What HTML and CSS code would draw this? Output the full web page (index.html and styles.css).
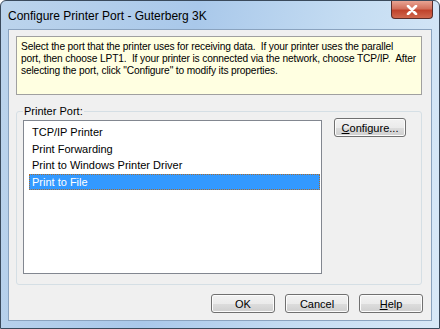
FILE: index.html
```html
<!DOCTYPE html>
<html>
<head>
<meta charset="utf-8">
<link rel="stylesheet" href="styles.css">
</head>
<body>
<div class="window">
  <div class="titlebar">
    <span class="title">Configure Printer Port - Guterberg 3K</span>
    <div class="close"><svg width="14" height="10" viewBox="0 0 14 10"><path d="M3 1 L11 9 M11 1 L3 9" stroke="#fff" stroke-width="2.6" stroke-linecap="round"/></svg></div>
  </div>
  <div class="client">
    <div class="info">Select the port that the printer uses for receiving data.&nbsp; If your printer uses the parallel<br>port, then choose LPT1.&nbsp; If your printer is connected via the network, choose TCP/IP.&nbsp; After<br>selecting the port, click "Configure" to modify its properties.</div>
    <fieldset class="group">
      <legend>Printer Port:</legend>
      <div class="grouprow">
        <div class="list">
          <div class="item">TCP/IP Printer</div>
          <div class="item">Print Forwarding</div>
          <div class="item">Print to Windows Printer Driver</div>
          <div class="item sel">Print to File</div>
        </div>
        <button class="btn cfg"><u>C</u>onfigure...</button>
      </div>
    </fieldset>
    <div class="buttons">
      <button class="btn">OK</button>
      <button class="btn">Cancel</button>
      <button class="btn"><u>H</u>elp</button>
    </div>
  </div>
</div>
</body>
</html>
```
FILE: styles.css
```css
html, body { margin: 0; padding: 0; }
body { width: 440px; height: 329px; overflow: hidden; background: #fff; font-family: "Liberation Sans", sans-serif; font-size: 11px; }
.window {
  box-sizing: border-box; width: 440px; height: 329px;
  border: 1px solid #3a4a5c; border-radius: 6px 6px 0 0;
  background: linear-gradient(100deg, #bcd4ec 0%, #a9c8ea 40%, #c4dcf2 70%, #d9e9f8 100%);
  padding: 0 7px 7px 7px; display: flex; flex-direction: column;
}
.titlebar { height: 28px; display: flex; align-items: flex-start; justify-content: space-between; }
.title { font-family: "Liberation Sans", sans-serif; font-size: 12px; color: #000; margin-top: 8px; }
.close {
  width: 42px; height: 18px; margin-right: -1px; box-sizing: border-box;
  border: 1px solid #5a2d2a; border-top: none; border-radius: 0 0 4px 4px;
  background: linear-gradient(#e8a493 0%, #d2705c 45%, #c0432c 55%, #d0684e 100%);
  display: flex; align-items: center; justify-content: center;
}
.client {
  flex: 1; background: #f0f0f0; border: 1px solid #8aa3bf;
  display: flex; flex-direction: column; padding: 6px 9px 7px 7px;
}
.info {
  background: #ffffe1; border: 1px solid #a0a0a0; height: 48px;
  padding: 4px 4px 5px 4px; line-height: 12px; color: #000;
  font-size: 10.2px; letter-spacing: -0.14px; white-space: nowrap;
}
.group {
  margin: 10px 0 0 0; border: 1px solid #d5dfe5; border-radius: 3px;
  padding: 2px 7px 10px 7px; box-sizing: border-box; min-width: 0;
}
.group legend { font-size: 11px; padding: 0 1px; margin-left: -1px; }
.grouprow { display: flex; align-items: flex-start; }
.list {
  width: 299px; height: 154px; background: #fff; border: 1px solid #828790;
  padding: 3px 1px 0 5px; box-sizing: border-box; margin-top: 1px; margin-left: -1px;
}
.item { height: 16.5px; line-height: 16px; padding-left: 3px; }
.item.sel { background: #3399ff; color: #fff; outline: 1px dotted #a86b2e; outline-offset: -1px; }
.btn {
  font-family: "Liberation Sans", sans-serif; font-size: 11px; color: #000;
  width: 64px; height: 19px; box-sizing: border-box; padding: 0;
  border: 1px solid #707070; border-radius: 3px;
  background: linear-gradient(#f2f2f2 0%, #ebebeb 50%, #dddddd 51%, #cfcfcf 100%);
  box-shadow: inset 0 0 0 1px #fcfcfc;
}
.cfg { width: 72px; margin-left: 12px; margin-top: -1px; }
.buttons { display: flex; justify-content: flex-end; gap: 10px; margin-top: auto; margin-right: -1px; }
```
